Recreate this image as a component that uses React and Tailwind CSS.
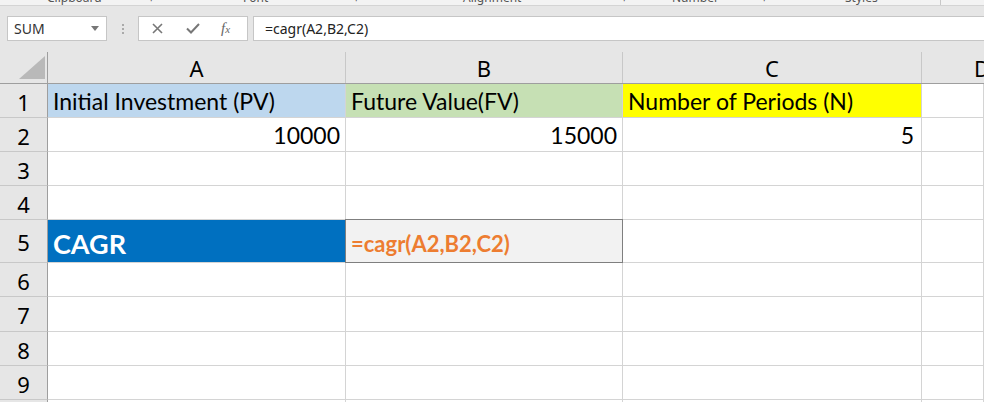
import React from 'react';

const rows = [
    { n: 1, h: 'h-[34px]' },
    { n: 2, h: 'h-[34px]' },
    { n: 3, h: 'h-[34px]' },
    { n: 4, h: 'h-[34px]' },
    { n: 5, h: 'h-[43px]' },
    { n: 6, h: 'h-[34px]' },
    { n: 7, h: 'h-[35px]' },
    { n: 8, h: 'h-[34px]' },
    { n: 9, h: 'h-[34px]' },
    { n: 10, h: 'h-[34px]' },
];

const cellFont = { fontFamily: 'Lato, "Noto Sans", sans-serif' };
const uiFont = { fontFamily: '"Noto Sans", "Open Sans", sans-serif' };

const RibbonStrip = () => (
    <div className="h-[6px] bg-[#f3f3f3] border-b border-[#d4d4d4] flex items-end overflow-hidden text-[12px] leading-[14px] text-[#555]" style={uiFont}>
        <span className="ml-[47px] w-[103px]">Clipboard</span>
        <span className="w-[93px]">⌐</span>
        <span className="w-[112px]">Font</span>
        <span className="w-[108px]">⌐</span>
        <span className="w-[160px]">Alignment</span>
        <span className="w-[49px]">⌐</span>
        <span className="w-[91px]">Number</span>
        <span className="w-[82px]">⌐</span>
        <span className="w-[95px]">Styles</span>
        <span className="h-full border-l border-[#c8c8c8]"></span>
    </div>
);

const FormulaBar = () => (
    <div className="flex items-stretch bg-[#e6e6e6] pt-[10px] h-[35px]" style={uiFont}>
        <div className="ml-[7px] w-[100px] bg-white border border-[#c6c6c6] flex items-center justify-between pl-[6px] pr-[7px] text-[14px] text-[#333]">
            <span>SUM</span>
            <svg width="8" height="5" viewBox="0 0 8 5"><path d="M0 0 L8 0 L4 5 Z" fill="#777" /></svg>
        </div>
        <div className="w-[31px] flex flex-col items-center justify-center gap-[2px]">
            <span className="w-[2px] h-[2px] bg-[#aaa]"></span>
            <span className="w-[2px] h-[2px] bg-[#aaa]"></span>
            <span className="w-[2px] h-[2px] bg-[#aaa]"></span>
        </div>
        <div className="w-[110px] bg-white border border-[#c6c6c6] flex items-center">
            <svg className="ml-[13px]" width="11" height="11" viewBox="0 0 11 11">
                <path d="M1 1 L10 10 M10 1 L1 10" stroke="#777" strokeWidth="1.6" />
            </svg>
            <svg className="ml-[23px]" width="14" height="11" viewBox="0 0 14 11">
                <path d="M1 5.5 L5 9.5 L13 1" stroke="#777" strokeWidth="2" fill="none" />
            </svg>
            <span className="ml-[21px] text-[15px] text-[#666] italic leading-none" style={{ fontFamily: '"Liberation Serif", serif' }}>
                f<span className="text-[11px]">x</span>
            </span>
        </div>
        <div className="ml-[5px] flex-1 bg-white border-y border-l border-[#c6c6c6] flex items-center pl-[11px] text-[14px] text-[#222]">
            =cagr(A2,B2,C2)
        </div>
    </div>
);

const ColumnHeaders = () => (
    <div className="h-[43px] bg-[#e6e6e6] pt-[11px] border-b border-[#9e9e9e]">
        <div className="grid grid-cols-[48px_298px_277px_299px_1fr] h-full text-[22px] leading-none text-black" style={uiFont}>
            <div className="border-r border-[#9e9e9e] flex items-end justify-end pr-[2px] pb-[4px]">
                <svg width="26" height="23" viewBox="0 0 26 23"><path d="M26 0 L26 23 L0 23 Z" fill="#b9b9b9" /></svg>
            </div>
            <div className="border-r border-[#c8c8c8] flex items-center justify-center">A</div>
            <div className="border-r border-[#c8c8c8] flex items-center justify-center">B</div>
            <div className="border-r border-[#c8c8c8] flex items-center justify-center">C</div>
            <div className="flex items-center pl-[52px]">D</div>
        </div>
    </div>
);

const Cell = ({ className = '', children }) => (
    <div className={`border-r border-b border-[#d4d4d4] flex items-end px-[5px] pb-[3px] leading-[26px] whitespace-nowrap overflow-hidden ${className}`}>
        {children}
    </div>
);

const App = () => {
    return (
        <div className="w-[984px] h-[402px] overflow-hidden bg-white">
            <RibbonStrip />
            <FormulaBar />
            <ColumnHeaders />
            <div className="grid grid-cols-[48px_298px_277px_299px_1fr] text-[23px] text-black" style={cellFont}>
                {rows.map(r => (
                    <React.Fragment key={r.n}>
                        <div className={`${r.h} bg-[#e6e6e6] border-r border-[#9e9e9e] border-b border-b-[#c8c8c8] flex items-center justify-center text-[22px] leading-none pt-[2px]`} style={uiFont}>
                            {r.n}
                        </div>
                        {r.n === 1 && (
                            <>
                                <Cell className="bg-[#bdd7ee]">Initial Investment (PV)</Cell>
                                <Cell className="bg-[#c6e0b4]">Future Value(FV)</Cell>
                                <Cell className="bg-[#ffff00]">Number of Periods (N)</Cell>
                                <Cell />
                            </>
                        )}
                        {r.n === 2 && (
                            <>
                                <Cell className="justify-end">10000</Cell>
                                <Cell className="justify-end">15000</Cell>
                                <Cell className="justify-end pr-[7px]">5</Cell>
                                <Cell />
                            </>
                        )}
                        {r.n === 5 && (
                            <>
                                <Cell className="bg-[#0070c0] border-[#0070c0] text-white font-bold text-[27px] pb-[5px]">CAGR</Cell>
                                <div className="bg-[#f2f2f2] border border-[#7f7f7f] -ml-px -mt-px flex items-end px-[5px] pb-[5px] leading-[26px] text-[#ed7d31] font-bold text-[22px] whitespace-nowrap">
                                    =cagr(A2,B2,C2)
                                </div>
                                <Cell />
                                <Cell />
                            </>
                        )}
                        {r.n !== 1 && r.n !== 2 && r.n !== 5 && (
                            <>
                                <Cell />
                                <Cell />
                                <Cell />
                                <Cell />
                            </>
                        )}
                    </React.Fragment>
                ))}
            </div>
        </div>
    );
};

export default App;
